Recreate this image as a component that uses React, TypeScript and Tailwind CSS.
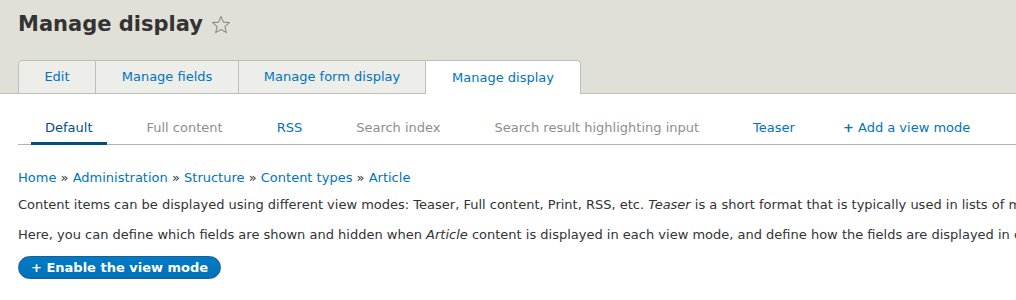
import React from 'react';

const primaryTabs = [
  { label: 'Edit', w: 'w-[78px]' },
  { label: 'Manage fields', w: 'w-[143px]' },
  { label: 'Manage form display', w: 'w-[187px]' },
];

const viewModes = [
  { label: 'Default', state: 'active' },
  { label: 'Full content', state: 'off' },
  { label: 'RSS', state: 'on' },
  { label: 'Search index', state: 'off' },
  { label: 'Search result highlighting input', state: 'off' },
  { label: 'Teaser', state: 'on' },
];

function Star() {
  return (
    <svg width="20" height="20" viewBox="0 0 20 20" className="ml-[8px] mt-[1px]">
      <path
        d="M10 1.5l2.45 5.6 6.05.55-4.6 4 1.4 5.95L10 14.45 4.7 17.6l1.4-5.95-4.6-4 6.05-.55z"
        fill="none"
        stroke="#8d8d85"
        strokeWidth="1.1"
        strokeLinejoin="round"
      />
    </svg>
  );
}

export default function App() {
  return (
    <div className="w-[1016px] h-[300px] overflow-hidden bg-white text-[13px] text-[#333] font-['DejaVu_Sans',sans-serif]">
      <header className="bg-[#e0e0d8] pt-[9px] px-[18px] border-b border-[#bfbfba]">
        <div className="flex items-center h-[30px]">
          <h1 className="text-[21px] font-bold text-[#333] leading-none">Manage display</h1>
          <Star />
        </div>
        <nav className="flex mt-[21px] -mb-px">
          {primaryTabs.map((t, i) => (
            <a
              key={t.label}
              className={`${t.w} h-[34px] flex items-center justify-center bg-[#ededea] text-[#0074bd] border-t border-[#bfbfba] border-r ${i === 0 ? 'border-l rounded-tl-[4px]' : ''} border-b`}
            >
              {t.label}
            </a>
          ))}
          <a className="w-[155px] h-[34px] flex items-center justify-center bg-white text-[#0074bd] border border-b-0 border-[#bfbfba] border-l-0 rounded-t-[4px] rounded-tl-none">
            Manage display
          </a>
        </nav>
      </header>

      <div className="px-[18px]">
        <nav className="flex items-end h-[52px] pl-[13px] gap-[26px] border-b border-[#b3b3b3] mt-[-1px] -mr-[18px] whitespace-nowrap">
          {viewModes.map((m) => (
            <a
              key={m.label}
              className={`px-[14px] pb-[5px] border-b-[3px] -mb-px ${
                m.state === 'active'
                  ? 'border-[#004f80] text-[#004f80]'
                  : m.state === 'on'
                  ? 'border-transparent text-[#0074bd]'
                  : 'border-transparent text-[#8e8e8e]'
              }`}
            >
              {m.label}
            </a>
          ))}
          <a className="pb-[5px] mb-[2px] ml-[8px] text-[#0074bd]">
            <span className="font-bold">+</span> Add a view mode
          </a>
        </nav>

        <div className="mt-[24px] whitespace-nowrap leading-[17px]">
          <div className="text-[#0074bd]">
            <a>Home</a> <span className="text-[#333]">»</span> <a>Administration</a>{' '}
            <span className="text-[#333]">»</span> <a>Structure</a> <span className="text-[#333]">»</span>{' '}
            <a>Content types</a> <span className="text-[#333]">»</span> <a>Article</a>
          </div>
          <p className="mt-[10px]">
            Content items can be displayed using different view modes: Teaser, Full content, Print, RSS, etc.{' '}
            <em>Teaser</em> is a short format that is typically used in lists of multiple content items.{' '}
            <em>Full content</em> is typically used when the content is displayed on its own page.
          </p>
          <p className="mt-[13px]">
            Here, you can define which fields are shown and hidden when <em>Article</em> content is displayed in each
            view mode, and define how the fields are displayed in each view mode.
          </p>
          <button className="mt-[13px] h-[23px] px-[12px] rounded-full bg-gradient-to-b from-[#007bc6] to-[#0071b8] border border-[#1e5c90] text-white font-bold text-[13px] leading-none">
            + Enable the view mode
          </button>
        </div>
      </div>
    </div>
  );
}
